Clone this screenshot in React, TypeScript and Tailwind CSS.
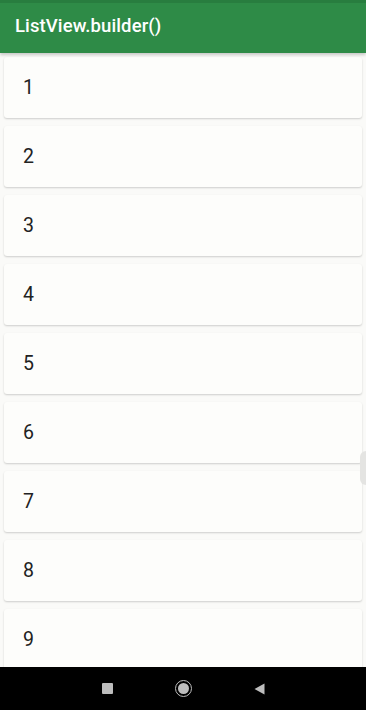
import React from "react";

const items = Array.from({ length: 9 }, (_, i) => i + 1);

function NavBar() {
  return (
    <div className="h-[43px] bg-black flex items-center justify-center gap-[62px] shrink-0">
      <div className="w-[11px] h-[11px] bg-[#bdbdbd] rounded-[1px]" />
      <div className="w-[17px] h-[17px] rounded-full border-[1.5px] border-[#bdbdbd] flex items-center justify-center">
        <div className="w-[11px] h-[11px] rounded-full bg-[#bdbdbd]" />
      </div>
      <svg width="11" height="12" viewBox="0 0 11 12">
        <path d="M10.5 0.5 L10.5 11.5 L0.5 6 Z" fill="#bdbdbd" />
      </svg>
    </div>
  );
}

export default function App() {
  return (
    <div
      className="w-[366px] h-[710px] flex flex-col bg-[#fafaf8] overflow-hidden"
      style={{ fontFamily: "Roboto, 'Noto Sans', sans-serif" }}
    >
      <header className="h-[53px] shrink-0 bg-[#2e8b47] border-t-[3px] border-[#287d3f] shadow-[0_2px_3px_rgba(0,0,0,0.2)] flex items-center px-[15px] z-10">
        <h1 className="text-white text-[18.5px] font-medium tracking-[0.1px] -mt-[2px]">ListView.builder()</h1>
      </header>
      <div className="relative flex-1 overflow-hidden flex flex-col">
        {items.map((n) => (
          <div
            key={n}
            className="shrink-0 m-[4px] h-[61px] bg-[#fdfdfb] rounded-[3px] shadow-[0_1px_2px_rgba(0,0,0,0.18)] flex items-center px-[19px]"
          >
            <span className="text-[19.5px] text-[#222]">{n}</span>
          </div>
        ))}
        <div className="absolute right-0 top-[398px] w-[6px] h-[34px] rounded-l-full bg-[#e4e4e2]" />
      </div>
      <NavBar />
    </div>
  );
}
